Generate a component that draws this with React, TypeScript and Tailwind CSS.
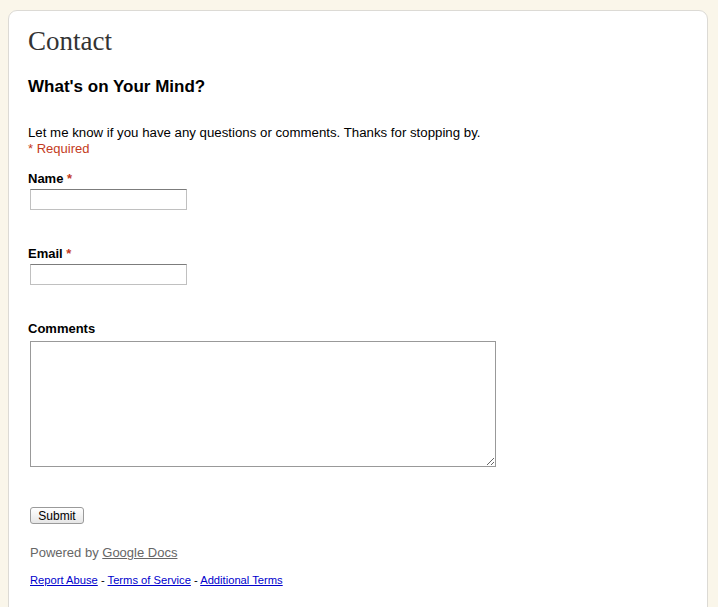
export default function App() {
  return (
    <div className="min-h-[607px] bg-[#faf6ea] pt-[10px] pl-[8px] pr-[10px] font-['Liberation_Sans',Arial,sans-serif] text-[13px] text-black">
      <div className="h-[620px] w-[700px] rounded-[9px] border border-[#dcdad5] bg-white pl-[19px] pt-[14px]">
        <h1 className="font-['Liberation_Serif',serif] text-[27px] leading-[32px] text-[#333]">Contact</h1>
        <h2 className="mt-[20px] text-[17px] font-bold leading-[20px]">What's on Your Mind?</h2>
        <p className="mt-[28px] text-[13.25px] leading-[16px]">
          Let me know if you have any questions or comments. Thanks for stopping by.
        </p>
        <p className="leading-[16px] text-[#c43b1d]">* Required</p>

        <div className="mt-[14px]">
          <label className="block font-bold leading-[16px]">
            Name <span className="text-[#c43b1d]">*</span>
          </label>
          <input
            type="text"
            className="ml-[2px] mt-[2px] h-[21px] w-[157px] border border-[#c0c0c0] border-t-[#7c7c7c] bg-white"
          />
        </div>

        <div className="mt-[36px]">
          <label className="block font-bold leading-[16px]">
            Email <span className="text-[#c43b1d]">*</span>
          </label>
          <input
            type="text"
            className="ml-[2px] mt-[2px] h-[21px] w-[157px] border border-[#c0c0c0] border-t-[#7c7c7c] bg-white"
          />
        </div>

        <div className="mt-[36px]">
          <label className="block font-bold leading-[16px]">Comments</label>
          <textarea className="ml-[2px] mt-[4px] block h-[126px] w-[466px] border border-[#999] bg-white" />
        </div>

        <button className="ml-[2px] mt-[40px] h-[17px] w-[54px] rounded-[3px] border border-[#9a9a9a] bg-gradient-to-b from-white to-[#e6e6e6] text-[12px] leading-[14px]">
          Submit
        </button>

        <div className="mt-[20px] ml-[2px] leading-[16px] text-[#666]">
          Powered by{' '}
          <a href="#" className="text-[#666] underline">
            Google Docs
          </a>
        </div>

        <div className="mt-[12px] ml-[2px] text-[11.2px] leading-[14px] text-black">
          <a href="#" className="text-[#0000cc] underline">Report Abuse</a>
          {' - '}
          <a href="#" className="text-[#0000cc] underline">Terms of Service</a>
          {' - '}
          <a href="#" className="text-[#0000cc] underline">Additional Terms</a>
        </div>
      </div>
    </div>
  );
}
